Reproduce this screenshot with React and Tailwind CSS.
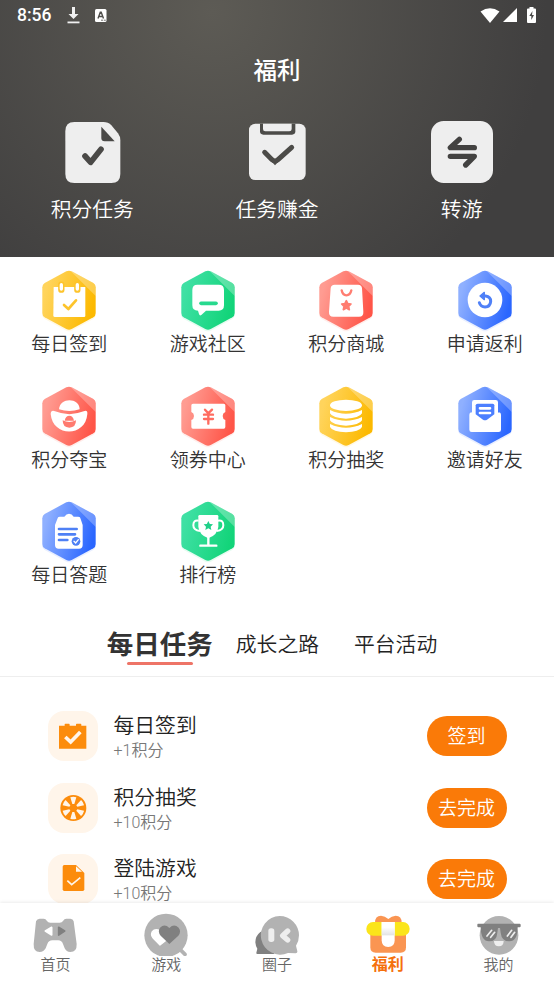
import React, { useState } from 'react'

const HEX_COLORS = {
  yellow: ['#ffd45c', '#fcb900'],
  green: ['#3fe0a4', '#12d479'],
  red: ['#ff9c92', '#ff5548'],
  blue: ['#8fb0ff', '#2a66ff'],
}

const HEX_PATH =
  'M82 10 Q90 6 98 10 L163 45 Q170 49 170 58 V135 Q170 144 163 148 L98 183 Q90 187 82 183 L17 148 Q10 144 10 135 V58 Q10 49 17 45 Z'

const Hex = ({ id, color, children }) => {
  const [from, to] = HEX_COLORS[color]
  return (
    <svg className="h-16 w-[60px]" viewBox="0 0 180 192" fill="none">
      <defs>
        <linearGradient id={id} x1="0" y1="0.35" x2="1" y2="0.65">
          <stop offset="0.05" stopColor={from} />
          <stop offset="0.95" stopColor={to} />
        </linearGradient>
      </defs>
      <path d={HEX_PATH} fill={to} opacity="0.1" transform="translate(0 5)" />
      <path d={HEX_PATH} fill={`url(#${id})`} />
      <path d="M94 8 L98 10 L163 45 Q170 49 170 58 V84 Z" fill="#fff" opacity="0.28" />
      {children()}
    </svg>
  )
}

const STAR = 'M0 -14 L4.5 -5 L14 -4 L7 3 L9 13 L0 8 L-9 13 L-7 3 L-14 -4 L-4.5 -5 Z'

const glyphs = {
  calendar: () => (
    <>
      <path d="M44 57 H139 V143 Q139 147 135 147 H48 Q43 147 43 143 Z" fill="#fff" />
      <path d="M67 50 V65 M115 50 V65" stroke="#fdc42c" strokeWidth="19" strokeLinecap="round" />
      <path d="M67 50 V63 M115 50 V63" stroke="#fff" strokeWidth="10" strokeLinecap="round" />
      <path d="M75 111 L88 123 L111 97" stroke="#fdc42c" strokeWidth="8" strokeLinecap="round" strokeLinejoin="round" />
    </>
  ),
  chat: () => (
    <>
      <path d="M58 50 H122 Q138 50 138 66 V112 Q138 128 122 128 H84 L70 141 Q65 145 63 138 L60 128 Q43 128 43 112 V66 Q43 50 58 50 Z" fill="#fff" />
      <path d="M69 106 H114" stroke="#27d98e" strokeWidth="11" strokeLinecap="round" />
    </>
  ),
  bag: () => (
    <>
      <path d="M56 50 H126 Q137 50 138 61 L142 131 Q143 146 129 146 H52 Q38 146 39 131 L44 61 Q45 50 56 50 Z" fill="#fff" />
      <path d="M77 67 Q80 82 91 82 Q103 82 106 67" stroke="#ff7d71" strokeWidth="7" strokeLinecap="round" />
      <path d={STAR} transform="translate(91 112)" fill="#ff7d71" stroke="#ff7d71" strokeWidth="5" strokeLinejoin="round" />
    </>
  ),
  refund: () => (
    <>
      <circle cx="90" cy="96" r="52" fill="#fff" />
      <path d="M87 84 H92 Q107 86 107 100 Q106 116 90 117 Q77 117 73 104" stroke="#4f80f7" strokeWidth="9" strokeLinecap="round" />
      <path d="M75 84 L88 73 V95 Z" fill="#4f80f7" stroke="#4f80f7" strokeWidth="4" strokeLinejoin="round" />
    </>
  ),
  ingot: () => (
    <>
      <path d="M60 76 C62 40 121 40 122 76 Q91 86 60 76 Z" fill="#fff" />
      <path d="M48 82 Q91 99 134 82 Q146 77 145 90 C140 160 41 160 35 90 Q36 77 48 82 Z" fill="#fff" />
      <path d="M77 110 Q80 95 91 95 Q102 95 105 110 Z" fill="#ff7a6f" />
      <path d="M71 109 Q91 119 111 109 Q111 131 91 131 Q71 131 71 109 Z" fill="#ff7a6f" />
    </>
  ),
  coupon: () => (
    <>
      <path d="M45 59 H137 Q142 59 142 64 V84 Q134 87 134 96 Q134 105 142 108 V129 Q142 134 137 134 H45 Q40 134 40 129 V108 Q48 105 48 96 Q48 87 40 84 V64 Q40 59 45 59 Z" fill="#fff" />
      <path d="M81 77 L91 88 L102 77 M78 92 H105 M78 105 H105 M91 90 V119" stroke="#ff6c60" strokeWidth="7" strokeLinecap="round" />
    </>
  ),
  coins: () => (
    <>
      <ellipse cx="90" cy="64" rx="48" ry="17" fill="#fff" />
      <path d="M42 78 Q90 101 138 78 V88 Q130 103 90 104 Q50 103 42 88 Z" fill="#fff" />
      <path d="M42 99 Q90 122 138 99 V109 Q130 124 90 125 Q50 124 42 109 Z" fill="#fff" />
      <path d="M42 120 Q90 143 138 120 V129 Q130 144 90 145 Q50 144 42 129 Z" fill="#fff" />
    </>
  ),
  letter: () => (
    <>
      <rect x="51" y="48" width="78" height="70" rx="7" fill="#fff" />
      <path d="M49 85 L84 106 Q90 110 96 106 L132 85 Q138 86 138 92 V137 Q138 144 131 144 H50 Q43 144 43 137 V92 Q43 86 49 85 Z" fill="#fff" />
      <path d="M68 59 H113 Q118 59 118 64 V91 L96 107 Q90 111 84 107 L62 91 V64 Q62 59 68 59 Z" fill="#4c7fff" />
      <path d="M75 73 H105 M75 87 H105" stroke="#fff" strokeWidth="8" strokeLinecap="round" />
    </>
  ),
  quiz: () => (
    <>
      <path d="M62 53 H76 Q82 44 90 44 Q99 44 104 53 H118 Q124 53 125 60 L131 78 V138 Q131 149 120 149 H59 Q48 149 48 138 V78 L55 60 Q56 53 62 53 Z" fill="#fff" />
      <path d="M60 90 H113 M60 106 H108 M60 123 H85" stroke="#4e80f5" strokeWidth="8" strokeLinecap="round" />
      <circle cx="111" cy="127" r="13" fill="#4e80f5" />
      <path d="M105 127 L110 132 L118 122" stroke="#fff" strokeWidth="4" strokeLinecap="round" />
    </>
  ),
  trophy: () => (
    <>
      <path d="M65 48 H117 Q121 48 121 52 V83 Q119 107 91 118 Q63 107 61 83 V52 Q61 48 65 48 Z" fill="#fff" />
      <path d="M62 65 Q46 62 46 79 Q46 94 66 96 M120 65 Q136 62 136 79 Q136 94 116 96" stroke="#fff" strokeWidth="6" />
      <path d="M91 115 V140 M67 140 H115" stroke="#fff" strokeWidth="7" strokeLinecap="round" />
      <path d={STAR} transform="translate(91 80)" fill="#1fcf88" />
    </>
  ),
}

const FEATURES = [
  { label: '每日签到', color: 'yellow', glyph: 'calendar' },
  { label: '游戏社区', color: 'green', glyph: 'chat' },
  { label: '积分商城', color: 'red', glyph: 'bag' },
  { label: '申请返利', color: 'blue', glyph: 'refund' },
  { label: '积分夺宝', color: 'red', glyph: 'ingot' },
  { label: '领券中心', color: 'red', glyph: 'coupon' },
  { label: '积分抽奖', color: 'yellow', glyph: 'coins' },
  { label: '邀请好友', color: 'blue', glyph: 'letter' },
  { label: '每日答题', color: 'blue', glyph: 'quiz' },
  { label: '排行榜', color: 'green', glyph: 'trophy' },
]

const DocIcon = () => (
  <svg className="size-[62px]" viewBox="0 0 186 186" fill="none">
    <path d="M40 3 H127 Q142 3 151 13 L171 37 Q178 46 178 58 V159 Q178 186 151 186 H40 Q13 186 13 159 V30 Q13 3 40 3 Z" fill="#eee" />
    <path d="M121 17 L161 61 H131 Q121 61 121 51 Z" fill="#4a4947" />
    <path d="M72 105 L89 124 L120 85" stroke="#4a4947" strokeWidth="17" strokeLinecap="round" strokeLinejoin="round" />
  </svg>
)

const ClipboardIcon = () => (
  <svg className="size-[62px]" viewBox="0 0 186 186" fill="none">
    <rect x="9" y="8" width="170" height="169" rx="19" fill="#eee" />
    <path d="M42 8 H148 V31 Q148 41 138 41 H52 Q42 41 42 31 Z" fill="#4c4b48" />
    <path d="M51 8 H137 V24 Q137 31 130 31 H58 Q51 31 51 24 Z" fill="#eee" />
    <path d="M56 94 L78 116 Q87 124 96 116 L137 79" stroke="#4c4b48" strokeWidth="15" strokeLinecap="round" />
    <path d="M70 114 L87 133 L105 114 Z" fill="#4c4b48" />
  </svg>
)

const TransferIcon = () => (
  <svg className="size-[62px]" viewBox="0 0 186 186" fill="none">
    <rect x="0" y="0" width="186" height="186" rx="38" fill="#eee" />
    <path d="M85 55 L58 80 H130 M58 106 H130 L104 132" stroke="#434241" strokeWidth="16" strokeLinecap="round" strokeLinejoin="round" />
  </svg>
)

const SHORTCUTS = [
  { label: '积分任务', Icon: DocIcon },
  { label: '任务赚金', Icon: ClipboardIcon },
  { label: '转游', Icon: TransferIcon },
]

const SignTaskIcon = () => (
  <svg className="size-[50px]" viewBox="0 0 150 150" fill="none">
    <path d="M33 44 H50 V39 Q50 38 52 38 H63 Q65 38 65 41 V44 H84 V41 Q84 38 86 38 H98 Q100 38 100 41 V44 H115 V113 H33 Z" fill="#fc8c0c" />
    <path d="M52 78 L68 93 L97 63" stroke="#fff5ea" strokeWidth="11" />
  </svg>
)

const WheelTaskIcon = () => (
  <svg className="size-[50px]" viewBox="0 0 150 150" fill="none">
    <circle cx="76" cy="75" r="39" fill="#fc8c0c" />
    {[0, 60, 120, 180, 240, 300].map(angle => (
      <path key={angle} d="M67 43 Q76 40 85 43 L79 63 H73 Z" fill="#fff5ea" transform={`rotate(${angle} 76 75)`} />
    ))}
  </svg>
)

const LoginTaskIcon = () => (
  <svg className="size-[50px]" viewBox="0 0 150 150" fill="none">
    <path d="M49 33 H84 L109 57 V106 Q109 111 104 111 H49 Q44 111 44 106 V38 Q44 33 49 33 Z" fill="#fc8c0c" />
    <path d="M84 37 V53 H102 Z" fill="#fff5ea" />
    <path d="M58 80 L71 92 L97 71" stroke="#fff5ea" strokeWidth="5" />
  </svg>
)

const TASKS = [
  { title: '每日签到', reward: '+1积分', action: '签到', Icon: SignTaskIcon },
  { title: '积分抽奖', reward: '+10积分', action: '去完成', Icon: WheelTaskIcon },
  { title: '登陆游戏', reward: '+10积分', action: '去完成', Icon: LoginTaskIcon },
]

const NAV_ITEMS = [
  {
    label: '首页',
    icon: (
      <>
        <path d="M26 20 H38 Q44 20 48 27 Q51 32 58 32 H86 Q93 32 96 27 Q100 20 106 20 H118 Q126 20 128 28 L137 96 Q138 120 118 120 Q106 120 101 109 L96 96 Q92 85 82 85 H64 Q53 85 49 96 L44 109 Q38 120 26 120 Q7 120 8 96 L15 28 Q18 20 26 20 Z" fill="#b2b2b2" />
        <path d="M43 57 L62 46 V69 Z" fill="#fff" stroke="#fff" strokeWidth="5" strokeLinejoin="round" />
        <path d="M83 46 L101 57 L83 69 Z" fill="#808080" stroke="#808080" strokeWidth="5" strokeLinejoin="round" />
      </>
    ),
  },
  {
    label: '游戏',
    icon: (
      <>
        <path d="M117 115 L129 127" stroke="#b2b2b2" strokeWidth="11" strokeLinecap="round" />
        <circle cx="72" cy="70" r="65" fill="#b2b2b2" />
        <path d="M54 99 L34 79 Q25 69 31 59 Q39 49 54 56 L76 82 Z" fill="#fff" stroke="#fff" strokeWidth="4" strokeLinejoin="round" />
        <path d="M82 96 L56 71 Q46 58 54 47 Q68 34 82 48 Q96 34 110 47 Q119 58 109 71 Z" fill="#808080" />
      </>
    ),
  },
  {
    label: '圈子',
    icon: (
      <>
        <path d="M60 62 Q42 52 22 60 Q7 72 7 91 Q8 103 13 110 L10 122 Q9 127 15 126 H64 Z" fill="#808080" />
        <path d="M80 12 A58 58 0 1 0 105 123 L128 124 Q134 124 133 118 L129 101 Q138 87 138 70 A58 58 0 0 0 80 12 Z" fill="#b2b2b2" />
        <rect x="46" y="49" width="18" height="41" rx="8" fill="#eee" />
        <path d="M104 57 L89 71 L104 84" stroke="#eee" strokeWidth="16" strokeLinecap="round" strokeLinejoin="round" />
      </>
    ),
  },
  {
    label: '福利',
    icon: (
      <>
        <path d="M33 32 Q33 11 51 11 Q63 12 73 21 Q83 12 95 11 Q113 11 113 32 Z" fill="#fa9552" />
        <path d="M19 59 H126 V106 Q126 122 110 122 H35 Q19 122 19 106 Z" fill="#fa9552" />
        <rect x="7" y="30" width="130" height="41" rx="20" fill="#fbe51b" />
        <path d="M53 30 H92 V85 Q92 105 72.5 105 Q53 105 53 85 Z" fill="#fff" />
        <path d="M53 30 H92 V70 H53 Z" fill="url(#ribbon)" />
        <defs>
          <linearGradient id="ribbon" x1="0" y1="0" x2="0" y2="1">
            <stop offset="0.4" stopColor="#fff" />
            <stop offset="1" stopColor="#e2e2e2" />
          </linearGradient>
        </defs>
      </>
    ),
  },
  {
    label: '我的',
    icon: (
      <>
        <circle cx="72" cy="70" r="58" fill="#b2b2b2" />
        <path d="M9 35 H134 Q137 35 137 39 V42 Q137 46 134 46 H128 Q128 88 103 88 Q80 88 77 62 L75 48 H69 L67 62 Q65 88 42 88 Q18 88 17 46 H10 Q7 46 7 42 V39 Q7 35 9 35 Z" fill="#808080" />
        <path d="M36 72 L50 55 M47 76 L59 61 M97 72 L110 55 M108 76 L119 61" stroke="#eee" strokeWidth="5" strokeLinecap="round" />
        <path d="M57 87 H86 Q86 103 71.5 103 Q57 103 57 87 Z" fill="#eee" />
      </>
    ),
  },
]

const TABS = ['每日任务', '成长之路', '平台活动']

const StatusBar = () => (
  <div className="flex h-[30px] items-center justify-between pr-[18px] pl-[17px]">
    <div className="flex items-center">
      <span className="w-[50px] pt-px font-['Roboto'] text-[17.5px] leading-[29px] font-medium">8:56</span>
      <svg className="h-[17px] w-[13px]" viewBox="0 0 13 17" fill="#f0f0f0">
        <path d="M5 0 H8 V7 H11.5 L6.5 12 L1.5 7 H5 Z" />
        <rect x="0.5" y="14.5" width="12" height="1.8" />
      </svg>
      <svg className="ml-[15px] h-[13px] w-3" viewBox="0 0 12 13">
        <rect width="11.5" height="13" rx="1.5" fill="#fff" />
        <path d="M3 9.5 L5.3 3.2 H6.2 L8.5 9.5 M4 7.5 H7.5" fill="none" stroke="#4f4e4b" strokeWidth="1.4" />
        <path d="M6 11.2 H11" stroke="#4f4e4b" strokeWidth="0.8" strokeDasharray="2 0.8" />
      </svg>
    </div>
    <div className="flex items-center">
      <svg className="mr-[3px] h-[15px] w-5" viewBox="0 0 20 15" fill="#fff">
        <path d="M0.5 3.5 Q10 -3 19.5 3.5 L10 15 Z" />
      </svg>
      <svg className="mr-[10px] h-3.5 w-3.5" viewBox="0 0 14 14" fill="#fff">
        <path d="M14 0 V14 H0 Z" />
      </svg>
      <svg className="h-4 w-[9px]" viewBox="0 0 9 16">
        <path d="M1 1.5 H2.5 V0 H6.5 V1.5 H8 Q9 1.5 9 2.5 V15 Q9 16 8 16 H1 Q0 16 0 15 V2.5 Q0 1.5 1 1.5 Z" fill="#fff" />
        <path d="M5.5 4 L2.3 9 H4.3 V13 L7 8 H5 Z" fill="#4a4a49" />
      </svg>
    </div>
  </div>
)

const App = () => {
  const [activeTab, setActiveTab] = useState('每日任务')
  const [activeNav, setActiveNav] = useState('福利')

  return (
    <div className="flex h-[984px] w-[554px] flex-col overflow-hidden bg-white font-['Roboto','Noto_Sans_CJK_SC',sans-serif]">
      <header className="h-[257px] shrink-0 bg-[radial-gradient(circle_at_212px_12px,#5d5b55_0px,#403f3f_335px)] text-white">
        <StatusBar />
        <h1 className="mt-6 text-center text-[23.5px] leading-[34px] font-medium">福利</h1>
        <div className="mt-[33px] grid grid-cols-3">
          {SHORTCUTS.map(({ label, Icon }) => (
            <button key={label} className="flex flex-col items-center">
              <Icon />
              <span className="mt-[11.5px] text-[20.8px] leading-[30px] font-[350]">{label}</span>
            </button>
          ))}
        </div>
      </header>

      <main className="min-h-0 flex-1 overflow-hidden">
        <section className="grid grid-cols-4 pt-[11px]">
          {FEATURES.map(({ label, color, glyph }) => (
            <button key={label} className="flex h-[115.5px] flex-col items-center">
              <Hex id={`hex-${glyph}`} color={color}>{glyphs[glyph]}</Hex>
              <span className="-mt-px text-[19px] leading-[28px] font-[350] text-[#333]">{label}</span>
            </button>
          ))}
        </section>

        <div className="flex h-[62px] items-center justify-center gap-[23px] border-b border-[#eee] pr-2.5">
          {TABS.map(tab => (
            <button
              key={tab}
              onClick={() => setActiveTab(tab)}
              className={
                tab === activeTab
                  ? 'relative text-[26.5px] leading-10 font-bold text-[#333]'
                  : 'text-[20.8px] leading-10 font-[350] text-[#222] last:ml-3'
              }
            >
              {tab}
              {tab === activeTab && (
                <span className="absolute bottom-0 left-5 h-[3px] w-[66px] rounded-full bg-[#ee7467]" />
              )}
            </button>
          ))}
        </div>

        <ul className="pt-[34.5px] pr-[47.5px] pl-[47.5px]">
          {TASKS.map(({ title, reward, action, Icon }) => (
            <li key={title} className="flex h-[71.5px] items-start">
              <div className="size-[50px] rounded-[16px] bg-[#fff5ea]">
                <Icon />
              </div>
              <div className="ml-4 flex flex-1 flex-col pt-px">
                <span className="text-[20.8px] leading-[28px] font-[350] text-[#222]">{title}</span>
                <span className="text-base leading-[22px] font-[350] text-[#777]">{reward}</span>
              </div>
              <button className="mt-[5px] h-10 w-20 rounded-full bg-[#fa7a08] pt-0.5 text-[19px] leading-[38px] font-[350] text-white">
                {action}
              </button>
            </li>
          ))}
        </ul>
      </main>

      <nav className="z-10 grid h-[81px] shrink-0 grid-cols-5 bg-white pt-[9px] shadow-[0_-1px_3px_rgba(0,0,0,0.08)]">
        {NAV_ITEMS.map(({ label, icon }) => (
          <button key={label} onClick={() => setActiveNav(label)} className="flex flex-col items-center">
            <svg className="h-11 w-12 shrink-0" viewBox="0 0 144 132" fill="none">{icon}</svg>
            <span
              className={
                label === activeNav
                  ? '-mt-px text-base leading-5 font-bold text-[#f5700c]'
                  : '-mt-px text-[15px] leading-5 font-[350] text-[#666]'
              }
            >
              {label}
            </span>
          </button>
        ))}
      </nav>
    </div>
  )
}

export default App
